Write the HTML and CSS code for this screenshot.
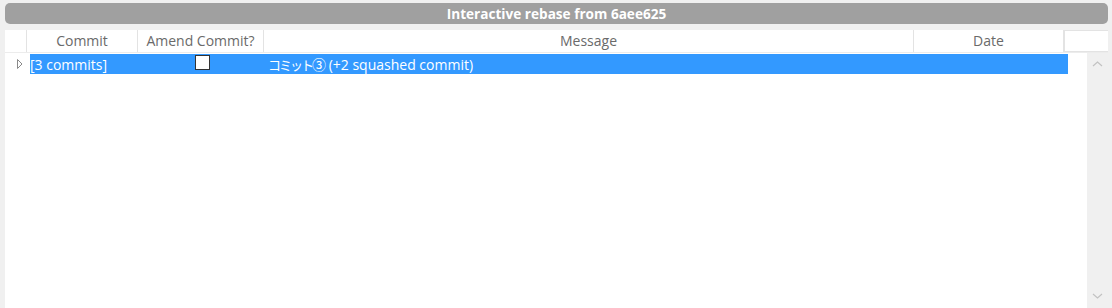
FILE: index.html
```html
<!DOCTYPE html>
<html>
<head>
<meta charset="utf-8">
<link rel="stylesheet" href="styles.css">
</head>
<body>
<div class="title">Interactive rebase from 6aee625</div>
<div class="grid">
  <div class="head">
    <div class="hc c-exp"></div>
    <div class="hc c-commit">Commit</div>
    <div class="hc c-amend">Amend Commit?</div>
    <div class="hc c-msg">Message</div>
    <div class="hc c-date">Date</div>
    <div class="hc c-extra"></div>
  </div>
  <div class="body">
    <div class="rows">
      <div class="row">
        <div class="exp">
          <svg width="8" height="12" viewBox="0 0 8 12"><path d="M1.5 1.5 L6 6 L1.5 10.5 Z" fill="none" stroke="#8a8a8a" stroke-width="1"/></svg>
        </div>
        <div class="sel">
          <div class="cell s-commit">[3 commits]</div>
          <div class="cell s-amend"><span class="check"></span></div>
          <div class="cell s-msg"><span class="jp">コミット</span><span class="circ">③</span> (+2 squashed commit)</div>
        </div>
      </div>
    </div>
    <div class="scroll">
      <svg class="arr up" width="11" height="6" viewBox="0 0 11 6"><path d="M1 5 L5.5 1 L10 5" fill="none" stroke="#c2c2c2" stroke-width="1.2"/></svg>
      <svg class="arr down" width="11" height="6" viewBox="0 0 11 6"><path d="M1 1 L5.5 5 L10 1" fill="none" stroke="#c2c2c2" stroke-width="1.2"/></svg>
    </div>
  </div>
</div>
</body>
</html>
```
FILE: styles.css
```css
html, body {
  margin: 0;
  padding: 0;
}
body {
  background: #f0f0f0;
  font-family: "Open Sans", "Noto Sans CJK JP", sans-serif;
  font-size: 14px;
  width: 1112px;
  height: 308px;
  overflow: hidden;
}
.title {
  margin: 3px 4px 0 5px;
  height: 21px;
  background: #a0a0a0;
  border-radius: 5px;
  color: #ffffff;
  font-weight: bold;
  font-size: 13.6px;
  text-align: center;
  line-height: 21px;
}
.grid {
  margin: 6px 4px 0 5px;
  height: 278px;
  background: #ffffff;
  display: flex;
  flex-direction: column;
}
.head {
  display: flex;
  height: 23px;
  box-sizing: border-box;
  border-bottom: 1px solid #ececec;
}
.hc {
  box-sizing: border-box;
  border-right: 1px solid #e3e3e3;
  color: #6a6a6a;
  text-align: center;
  line-height: 22px;
}
.c-exp { width: 22px; }
.c-commit { width: 111px; }
.c-amend { width: 126px; }
.c-msg { width: 650px; }
.c-date { width: 150px; }
.c-extra {
  width: 44px;
  border: 1px solid #e3e3e3;
  border-right: none;
}
.body {
  flex: 1;
  display: flex;
}
.rows {
  flex: 1;
  padding-top: 1px;
}
.row {
  display: flex;
  height: 20px;
}
.exp {
  width: 25px;
  display: flex;
  align-items: center;
  padding-left: 11px;
  box-sizing: border-box;
}
.sel {
  width: 1038px;
  background: #3399ff;
  color: #ffffff;
  display: flex;
  line-height: 21px;
}
.cell {
  box-sizing: border-box;
  white-space: nowrap;
}
.s-commit { width: 108px; padding-left: 0; }
.s-amend {
  width: 126px;
  display: flex;
  justify-content: center;
  padding-top: 1px;
  padding-left: 2px;
}
.check {
  display: block;
  width: 15px;
  height: 15px;
  box-sizing: border-box;
  background: #ffffff;
  border: 1px solid #333333;
}
.s-msg { padding-left: 4px; }
.jp { font-size: 13px; letter-spacing: -2px; }
.circ { font-size: 14px; letter-spacing: -1px; }
.scroll {
  width: 21px;
  background: #f0f0f0;
  display: flex;
  flex-direction: column;
  justify-content: space-between;
  align-items: center;
  padding: 8px 0 9px;
  box-sizing: border-box;
}
.arr { display: block; }
```
